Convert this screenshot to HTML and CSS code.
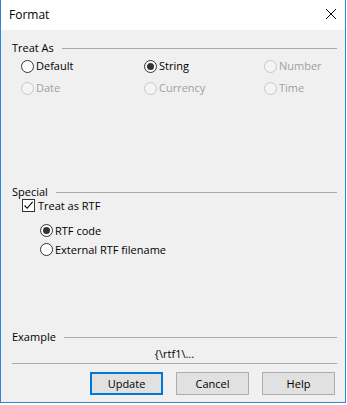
FILE: index.html
```html
<!DOCTYPE html>
<html>
<head>
<meta charset="utf-8">
<link rel="stylesheet" href="styles.css">
</head>
<body>
<div class="window">
  <div class="titlebar">
    <span class="title">Format</span>
    <svg class="close" width="12" height="12" viewBox="0 0 12 12"><path d="M1 1L11 11M11 1L1 11" stroke="#000" stroke-width="1" fill="none"/></svg>
  </div>
  <div class="content">
    <div class="group-head treat-head"><span>Treat As</span><div class="rule"></div></div>
    <div class="treat-grid">
      <label class="opt"><span class="radio"></span><span>Default</span></label>
      <label class="opt"><span class="radio checked"></span><span>String</span></label>
      <label class="opt disabled"><span class="radio"></span><span>Number</span></label>
      <label class="opt disabled"><span class="radio"></span><span>Date</span></label>
      <label class="opt disabled"><span class="radio"></span><span>Currency</span></label>
      <label class="opt disabled"><span class="radio"></span><span>Time</span></label>
    </div>

    <div class="group-head special-head"><span>Special</span><div class="rule"></div></div>
    <label class="check-row"><span class="checkbox"><svg width="11" height="11" viewBox="0 0 11 11"><path d="M1.5 5.5L4.2 8.3L9.6 1.8" stroke="#000" stroke-width="1.1" fill="none"/></svg></span><span>Treat as RTF</span></label>
    <div class="rtf-opts">
      <label class="opt sub"><span class="radio checked"></span><span>RTF code</span></label>
      <label class="opt sub"><span class="radio"></span><span>External RTF filename</span></label>
    </div>

    <div class="group-head example-head"><span>Example</span><div class="rule"></div></div>
    <div class="example-value">{\rtf1\...</div>
    <div class="separator"></div>
    <div class="buttons">
      <button class="btn default">Update</button>
      <button class="btn">Cancel</button>
      <button class="btn">Help</button>
    </div>
  </div>
</div>
</body>
</html>
```
FILE: styles.css
```css
html, body {
  margin: 0;
  padding: 0;
  background: #ffffff;
}
body {
  font-family: "Open Sans", "Noto Sans", sans-serif;
  font-size: 11px;
  color: #000;
}
.window {
  width: 344px;
  height: 402px;
  border-left: 1px solid #2f86d6;
  border-right: 1px solid #2f86d6;
  border-bottom: 1px solid #2f86d6;
  background: #f0f0f0;
  display: flex;
  flex-direction: column;
}
.titlebar {
  height: 30px;
  background: #ffffff;
  display: flex;
  align-items: center;
  justify-content: space-between;
  padding: 0 8px 0 8px;
  flex: none;
}
.title {
  font-size: 12px;
  margin-top: -1px;
}
.close {
  display: block;
  margin-top: -2px;
}
.content {
  padding: 11px 8px 0 11px;
  display: flex;
  flex-direction: column;
}
.group-head {
  height: 14px;
  line-height: 14px;
  display: flex;
  align-items: center;
}
.group-head .rule {
  flex: 1;
  height: 1px;
  background: #a9a9a9;
  margin-left: 8px;
  margin-top: 1px;
}
.treat-grid {
  display: grid;
  grid-template-columns: 123px 120px auto;
  grid-auto-rows: 22px;
  padding-left: 9px;
}
.opt {
  display: flex;
  align-items: center;
  gap: 2px;
  line-height: 14px;
  white-space: nowrap;
}
.radio {
  width: 11px;
  height: 11px;
  border: 1px solid #333;
  border-radius: 50%;
  background: #fff;
  position: relative;
  flex: none;
  box-sizing: content-box;
}
.radio.checked::after {
  content: "";
  position: absolute;
  left: 2px;
  top: 2px;
  width: 7px;
  height: 7px;
  border-radius: 50%;
  background: #333;
}
.opt.disabled {
  color: #a0a0a0;
}
.opt.disabled .radio {
  border-color: #c8c8c8;
  background: #f4f4f4;
}
.special-head {
  margin-top: 86px;
}
.check-row {
  display: flex;
  align-items: center;
  gap: 3px;
  height: 13px;
  padding-left: 10px;
  line-height: 14px;
}
.checkbox {
  width: 11px;
  height: 11px;
  border: 1px solid #333;
  background: #fff;
  display: flex;
  align-items: center;
  justify-content: center;
  flex: none;
  box-sizing: content-box;
}
.checkbox svg {
  display: block;
}
.rtf-opts {
  margin-top: 9px;
  padding-left: 28px;
  display: flex;
  flex-direction: column;
}
.opt.sub {
  height: 19px;
}
.example-head {
  margin-top: 71px;
}
.example-value {
  margin-top: 3px;
  height: 14px;
  line-height: 14px;
  text-align: center;
}
.separator {
  margin-top: 2px;
  height: 1px;
  background: #a9a9a9;
}
.buttons {
  margin-top: 8px;
  margin-right: 2px;
  display: flex;
  justify-content: flex-end;
  gap: 13px;
}
.btn {
  width: 73px;
  height: 23px;
  background: #e1e1e1;
  border: 1px solid #adadad;
  font-family: "Open Sans", "Noto Sans", sans-serif;
  font-size: 11px;
  color: #000;
  padding: 0;
  margin: 0;
  line-height: 20px;
}
.btn.default {
  border: 1px solid #0078d7;
  box-shadow: inset 0 0 0 1px #0078d7;
}
```
